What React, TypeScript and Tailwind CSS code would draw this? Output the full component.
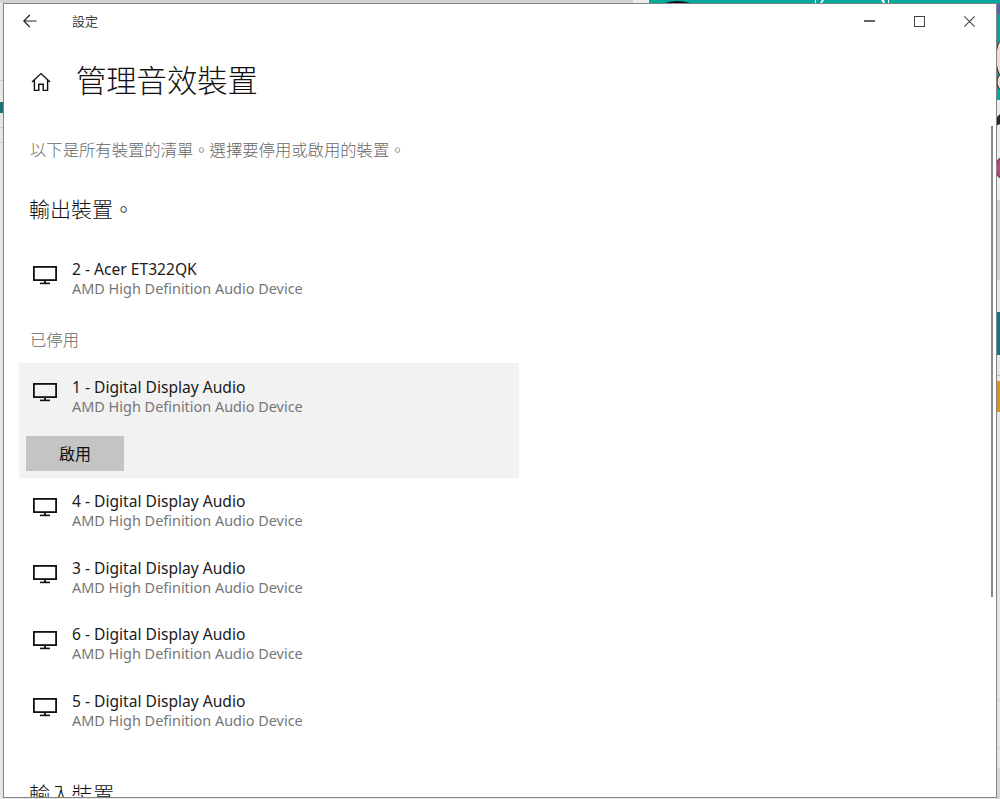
const cjk = "font-['Noto_Sans','Noto_Sans_CJK_TC',sans-serif]";

function Backdrop() {
  return (
    <svg className="absolute inset-0" width="1000" height="799" viewBox="0 0 1000 799">
      <rect x="0" y="0" width="1000" height="799" fill="#e6e6e6" />
      <rect x="0" y="0" width="633" height="3" fill="#d4d4d4" />
      <rect x="633" y="0" width="16" height="3" fill="#ececec" />
      <rect x="649" y="0" width="351" height="3" fill="#00a99d" />
      <path d="M665 3 Q677 -1 690 3Z" fill="#111" />
      <path d="M820 3l2-3h2l-2 3zM815 0h1v3h-1z" fill="#fff" />
      <path d="M881 0h3l1 3h-2zM888 0h1v3h-1z" fill="#fff" />
      {/* left edge */}
      <rect x="0" y="80" width="3" height="1" fill="#c8c8c8" />
      <rect x="0" y="127" width="3" height="1" fill="#c8c8c8" />
      <rect x="0" y="142" width="3" height="1" fill="#c8c8c8" />
      <rect x="0" y="102" width="3" height="11" fill="#1f6f73" />
      {/* right edge, what shows of the wallpaper */}
      <rect x="996" y="0" width="4" height="100" fill="#00a99d" />
      <ellipse cx="1000" cy="9" rx="4" ry="6" fill="#5468a8" />
      <ellipse cx="1001" cy="58" rx="5" ry="17" fill="#f0dcd2" stroke="#222" />
      <ellipse cx="1001" cy="82" rx="4" ry="7" fill="#f0dcd2" stroke="#222" />
      <rect x="996" y="100" width="4" height="100" fill="#ececec" />
      <path d="M996 118 L1000 114 L1000 124 L996 126Z" fill="#2a2a2a" />
      <ellipse cx="1001" cy="168" rx="5" ry="10" fill="#b8487c" stroke="#333" />
      <rect x="996" y="200" width="4" height="80" fill="#cfcfcf" />
      <rect x="996" y="312" width="4" height="43" fill="#0f7488" />
      <rect x="996" y="375" width="4" height="1" fill="#bdbdbd" />
      <rect x="996" y="381" width="4" height="31" fill="#e0950f" />
      <rect x="996" y="700" width="4" height="1" fill="#cfcfcf" />
      <rect x="996" y="748" width="4" height="1" fill="#cfcfcf" />
      <rect x="996" y="768" width="4" height="31" fill="#d6d6d6" />
    </svg>
  );
}

function MonitorIcon() {
  return (
    <svg width="26" height="20" viewBox="0 0 26 20" fill="none" stroke="#111" className="shrink-0">
      <rect x="1.9" y="1.9" width="22.2" height="13.2" strokeWidth="1.8" />
      <path d="M13 15v3" strokeWidth="1.8" />
      <path d="M8 18.4h10" strokeWidth="1.6" />
    </svg>
  );
}

function DeviceText({ name }: { name: string }) {
  return (
    <div className="ml-[14px] flex flex-col">
      <p className="text-[15.6px] leading-[20px] text-[#1a1a1a]">{name}</p>
      <p className="text-[14.45px] leading-[19px] text-[#767676]">AMD High Definition Audio Device</p>
    </div>
  );
}

function DeviceRow({ name, className }: { name: string; className: string }) {
  return (
    <div className={`flex items-start pl-[28px] ${className}`}>
      <div className="pt-[6px]">
        <MonitorIcon />
      </div>
      <DeviceText name={name} />
    </div>
  );
}

export default function App() {
  return (
    <div className={`relative w-[1000px] h-[799px] overflow-hidden ${cjk}`}>
      <Backdrop />
      <div className="absolute left-[3px] top-[3px] w-[994px] h-[795px] bg-white border-[1.5px] border-[#858585] overflow-hidden flex flex-col">
        {/* title bar */}
        <div className="flex items-center h-[34px] shrink-0">
          <div className="w-[68px] flex pl-[19px]">
            <svg width="14" height="14" viewBox="0 0 14 14" fill="none" stroke="#222" strokeWidth="1.2">
              <path d="M13.5 7H.8M6.8 1 .8 7l6 6" />
            </svg>
          </div>
          <span className="text-[13px] text-[#444] pt-[1px]">設定</span>
          <div className="ml-auto flex items-center">
            <div className="w-[50px] flex justify-center">
              <span className="block w-[11px] h-[1.5px] bg-[#666]" />
            </div>
            <div className="w-[50px] flex justify-center">
              <span className="block w-[11px] h-[11px] border-[1.4px] border-[#444]" />
            </div>
            <div className="w-[50px] mr-[2px] flex justify-center">
              <svg width="11" height="11" viewBox="0 0 11 11" fill="none" stroke="#444" strokeWidth="1.1">
                <path d="M.4.4l10.2 10.2M10.6.4.4 10.6" />
              </svg>
            </div>
          </div>
        </div>

        {/* heading */}
        <div className="flex items-center h-[44px] mt-[21px] shrink-0">
          <div className="w-[72px] flex justify-center pl-[2px] pt-[1px]">
            <svg width="20" height="20" viewBox="0 0 20 20" fill="none" stroke="#111" strokeWidth="1.4">
              <path d="M1 10 10 1.6 19 10M3.4 8v10.4h4.4v-6.2h4.4v6.2h4.4V8" />
            </svg>
          </div>
          <h1 className="text-[30.3px] leading-[44px] font-light text-[#111]">管理音效裝置</h1>
        </div>

        <p className="ml-[26px] mt-[35px] text-[16.33px] leading-[24px] font-light text-[#666]">以下是所有裝置的清單。選擇要停用或啟用的裝置。</p>

        <h2 className="ml-[25px] mt-[31px] text-[21px] leading-[32px] font-light text-[#111]">輸出裝置。</h2>

        <DeviceRow name="2 - Acer ET322QK" className="mt-[34px]" />

        <p className="ml-[26px] mt-[30px] text-[16.33px] leading-[24px] font-light text-[#666]">已停用</p>

        <div className="ml-[15px] mt-[11px] w-[500px] h-[115px] bg-[#f2f2f2] flex flex-col shrink-0">
          <div className="flex items-start pl-[13px] pt-[14px]">
            <div className="pt-[5px]">
              <MonitorIcon />
            </div>
            <DeviceText name="1 - Digital Display Audio" />
          </div>
          <button className="ml-[7px] mt-[20px] w-[98px] h-[35px] bg-[#c4c4c4] text-[16px] text-[#111] flex items-center justify-center">
            啟用
          </button>
        </div>

        <DeviceRow name="4 - Digital Display Audio" className="mt-[13px]" />
        <DeviceRow name="3 - Digital Display Audio" className="mt-[27.5px]" />
        <DeviceRow name="6 - Digital Display Audio" className="mt-[27.5px]" />
        <DeviceRow name="5 - Digital Display Audio" className="mt-[27.5px]" />

        <h2 className="ml-[25px] mt-[49px] text-[21.3px] leading-[32px] font-light text-[#111] shrink-0">輸入裝置</h2>

        {/* scrollbar */}
        <div className="absolute right-[3px] top-[122px] w-[2.5px] h-[471px] bg-[#8a8a8a]" />
      </div>
    </div>
  );
}
